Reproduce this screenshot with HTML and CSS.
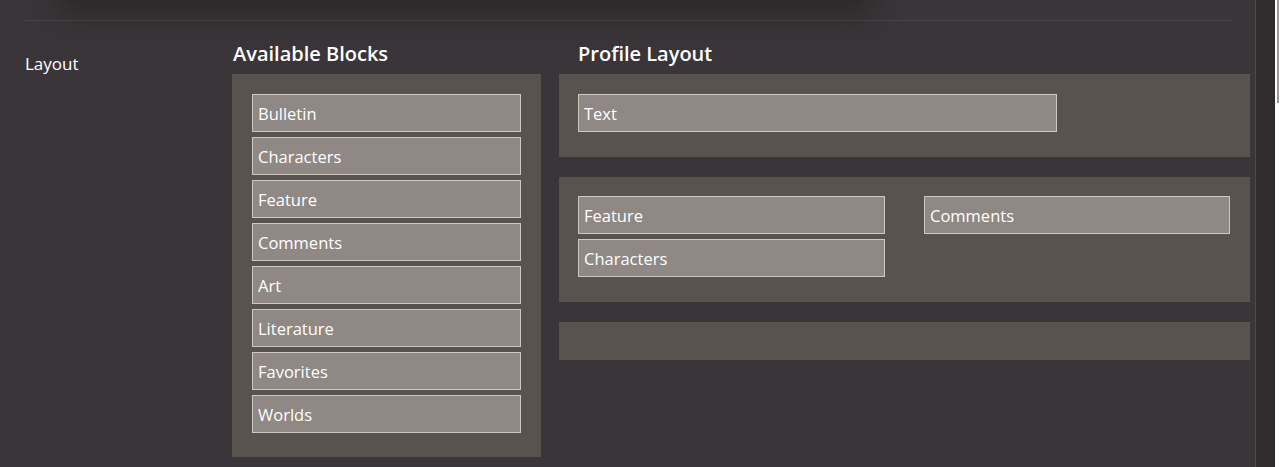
FILE: index.html
```
<!DOCTYPE html>
<html lang="en">
<head>
    <meta charset="UTF-8">
    <meta name="viewport" content="width=device-width, initial-scale=1.0">
    <title>Layout</title>
    <link rel="stylesheet" href="styles.css">
</head>
<body>

    <div class="page">
        <!-- Phần trên bị cuộn mất -->
        <div class="top-shade"></div>

        <div class="content">
            <div class="settings-row">
                <div class="row-label">Layout</div>

                <!-- Các khối có sẵn -->
                <div class="column">
                    <h3 class="column-title">Available Blocks</h3>
                    <div class="panel block-list">
                        <div class="block">Bulletin</div>
                        <div class="block">Characters</div>
                        <div class="block">Feature</div>
                        <div class="block">Comments</div>
                        <div class="block">Art</div>
                        <div class="block">Literature</div>
                        <div class="block">Favorites</div>
                        <div class="block">Worlds</div>
                    </div>
                </div>

                <!-- Bố cục hồ sơ -->
                <div class="column">
                    <h3 class="column-title profile-title">Profile Layout</h3>
                    <div class="panel">
                        <div class="block wide">Text</div>
                    </div>
                    <div class="panel two-cols">
                        <div class="col">
                            <div class="block">Feature</div>
                            <div class="block">Characters</div>
                        </div>
                        <div class="col">
                            <div class="block">Comments</div>
                        </div>
                    </div>
                    <div class="panel empty"></div>
                </div>
            </div>
        </div>

        <div class="side-strip"></div>
        <div class="scrollbar"><div class="thumb"></div></div>
    </div>

</body>
</html>
```

FILE: styles.css
```
/* Căn chỉnh chung */
body {
    margin: 0;
    background-color: #3a3538;
    color: #fff;
    font-family: "Open Sans", "Noto Sans", sans-serif;
    height: 467px;
    overflow: hidden;
}

.page {
    display: flex;
    height: 467px;
    position: relative;
}

/* Bóng mờ của phần đầu trang */
.top-shade {
    position: absolute;
    top: -60px;
    left: 70px;
    width: 790px;
    height: 62px;
    background-color: #2f2b2d;
    box-shadow: 0 0 30px 12px rgba(34, 31, 33, 0.6);
}

.content {
    flex: 1;
    padding: 20px 0 0 25px;
}

.settings-row {
    border-top: 1px solid #4a4548;
    width: 1206px;
    display: grid;
    grid-template-columns: 189px 309px 691px;
    column-gap: 18px;
    padding-top: 20px;
}

.row-label {
    font-size: 17px;
    padding-top: 11px;
}

.column-title {
    margin: 0 0 7px 1px;
    font-size: 20px;
    font-weight: 600;
    line-height: 26px;
}

.profile-title {
    margin-left: 19px;
}

/* Khung chứa các khối */
.panel {
    background-color: #59534f;
    padding: 20px 20px 20px 19px;
    margin-bottom: 20px;
}

.block-list {
    padding: 20px 20px 19px 20px;
}

.block {
    background-color: #8f8884;
    border: 1px solid #cfc8bd;
    height: 36px;
    line-height: 38px;
    padding-left: 5px;
    font-size: 16.5px;
    margin-bottom: 5px;
}

.block.wide {
    width: 472px;
}

.two-cols {
    display: grid;
    grid-template-columns: 307px 306px;
    column-gap: 39px;
    padding-top: 19px;
}

.panel.empty {
    height: 38px;
    padding: 0;
}

/* Thanh bên phải */
.side-strip {
    width: 19px;
    border-left: 1px solid #4d484b;
    background-color: #302c2e;
}

.scrollbar {
    width: 5px;
    background-color: #fff;
    position: relative;
}

.thumb {
    position: absolute;
    right: 1px;
    top: 0;
    width: 2px;
    height: 103px;
    background-color: #9a9a9a;
}
```
